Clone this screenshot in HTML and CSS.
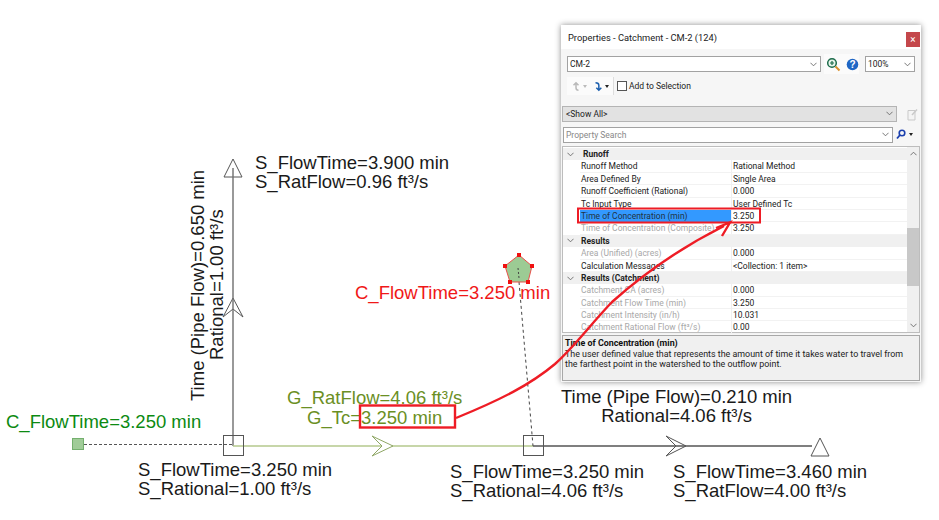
FILE: index.html
```html
<!DOCTYPE html>
<html lang="en">
<head>
<meta charset="utf-8">
<title>Properties - Catchment</title>
<link rel="stylesheet" href="styles.css">
</head>
<body>
<main class="canvas">
  <svg class="layer" viewBox="0 0 939 520" width="939" height="520" aria-hidden="true">
    <g fill="none">
      <path d="M233 159l-9 18h18z" stroke="#555" fill="#fff"/>
      <path d="M223 317L233 298L243 317L233 309Z" stroke="#555" fill="#fff"/>
      <path d="M233 168V446" stroke="#6e6e6e" stroke-width="1.4"/>
      <path d="M233 446H533" stroke="#b5c98c" stroke-width="1.4"/>
      <path d="M372 436L393 446L372 456L382 446Z" stroke="#8fa765" fill="#fff"/>
      <path d="M84 444.500H233" stroke="#555" stroke-dasharray="3 2"/>
      <path d="M518 270L533 446" stroke="#444" stroke-dasharray="3 3"/>
      <path d="M666 436L686 446L666 456L676 446Z" stroke="#555" fill="#fff"/>
      <path d="M533 446H812" stroke="#555" stroke-width="1.4"/>
      <path d="M820 438l-9 18h18z" stroke="#555" fill="#fff"/>
      <rect x="223.500" y="435.500" width="20" height="20" stroke="#555" />
      <rect x="523.500" y="435.500" width="20" height="20" stroke="#555" />
      <rect x="72.500" y="438.500" width="11" height="11" fill="#a0cc98" stroke="#74b06e"/>
      <path d="M519 255L532 266L528 282H510L505 266Z" fill="#9ccb94" stroke="#e8504a"/>
    </g>
    <g fill="#f01010">
      <rect x="517" y="253" width="4" height="4"/>
      <rect x="530" y="264" width="4" height="4"/>
      <rect x="526" y="280" width="4" height="4"/>
      <rect x="508" y="280" width="4" height="4"/>
      <rect x="503" y="264" width="4" height="4"/>
    </g>
    <path d="M518 268L519 278" stroke="#444" stroke-dasharray="2 2"/>
  </svg>

  <p class="label black l-s3900">S_FlowTime=3.900 min<br>S_RatFlow=0.96 ft³/s</p>
  <p class="label black l-vertical">Time (Pipe Flow)=0.650 min<br>Rational=1.00 ft³/s</p>
  <p class="label red l-cred">C_FlowTime=3.250 min</p>
  <p class="label green l-cgreen">C_FlowTime=3.250 min</p>
  <p class="label olive l-gutter">G_RatFlow=4.06 ft³/s<br>G_Tc=3.250 min</p>
  <p class="label black l-s1">S_FlowTime=3.250 min<br>S_Rational=1.00 ft³/s</p>
  <p class="label black l-s2">S_FlowTime=3.250 min<br>S_Rational=4.06 ft³/s</p>
  <p class="label black l-s3">S_FlowTime=3.460 min<br>S_RatFlow=4.00 ft³/s</p>
  <p class="label black l-pipe">Time (Pipe Flow)=0.210 min<br>Rational=4.06 ft³/s</p>

  <section class="window">
    <header class="titlebar">
      <span class="title">Properties - Catchment - CM-2 (124)</span>
      <span class="close">×</span>
    </header>

    <div class="row row-element">
      <div class="combo combo-main"><span>CM-2</span><svg class="chev" viewBox="0 0 8 5"><path d="M.5.500L4 4 7.500.500"/></svg></div>
      <div class="tools">
        <svg width="15" height="15" viewBox="0 0 15 15"><circle cx="6" cy="6" r="4.300" fill="#e6f4ea" stroke="#1c6b4a" stroke-width="1.500"/><path d="M4 6h4M6 4v4" stroke="#1c6b4a" stroke-width="1.200"/><path d="M9.500 9.500L13.500 13.500" stroke="#d9902c" stroke-width="2"/></svg>
        <svg width="13" height="13" viewBox="0 0 13 13"><circle cx="6.500" cy="6.500" r="5.800" fill="#1f66c4"/><text x="6.500" y="10" text-anchor="middle" class="help">?</text></svg>
      </div>
      <div class="combo combo-zoom"><span>100%</span><svg class="chev" viewBox="0 0 8 5"><path d="M.5.500L4 4 7.500.500"/></svg></div>
    </div>

    <div class="row row-nav">
      <div class="nav">
        <svg width="12" height="13" viewBox="0 0 12 13"><path d="M3 5L6 2 9 5M6 2V8q0 3 3 3" fill="none" stroke="#b9b9b9" stroke-width="1.800"/></svg>
        <span class="caret caret-off"></span>
        <svg width="12" height="13" viewBox="0 0 12 13"><path d="M3 2q4 0 4 3V11M4 8L7 11 10 8" fill="none" stroke="#1c5fae" stroke-width="1.800"/></svg>
        <span class="caret"></span>
      </div>
      <span class="check"></span>
      <span>Add to Selection</span>
    </div>

    <div class="row row-show">
      <div class="combo combo-show"><span>&lt;Show All&gt;</span><svg class="chev" viewBox="0 0 8 5"><path d="M.5.500L4 4 7.500.500"/></svg></div>
      <svg class="note" width="13" height="14" viewBox="0 0 13 14"><path d="M2 3.500H9V13H2Z" fill="#f4f4f4" stroke="#c9c9c9"/><path d="M6 8L11 2.500" stroke="#c9c9c9" stroke-width="1.500"/></svg>
    </div>

    <div class="row row-search">
      <div class="combo combo-search"><span>Property Search</span><svg class="chev" viewBox="0 0 8 5"><path d="M.5.500L4 4 7.500.500"/></svg></div>
      <svg width="10" height="11" viewBox="0 0 10 11"><circle cx="6" cy="4" r="2.800" fill="none" stroke="#1a3fae" stroke-width="1.600"/><path d="M4 6L1 9.500" stroke="#1a3fae" stroke-width="1.800"/></svg>
      <span class="caret"></span>
    </div>

    <div class="grid">
      <div class="props">
        <div class="group"><svg class="toggle" viewBox="0 0 8 5"><path d="M.5.500L4 4 7.500.500"/></svg><b class="group-runoff">Runoff</b></div>
        <div class="prop"><span class="k">Runoff Method</span><span class="v">Rational Method</span></div>
        <div class="prop"><span class="k">Area Defined By</span><span class="v">Single Area</span></div>
        <div class="prop"><span class="k">Runoff Coefficient (Rational)</span><span class="v">0.000</span></div>
        <div class="prop"><span class="k">Tc Input Type</span><span class="v">User Defined Tc</span></div>
        <div class="prop selected"><span class="k">Time of Concentration (min)</span><span class="v">3.250</span></div>
        <div class="prop"><span class="k off">Time of Concentration (Composite)</span><span class="v">3.250</span></div>
        <div class="group"><svg class="toggle" viewBox="0 0 8 5"><path d="M.5.500L4 4 7.500.500"/></svg><b>Results</b></div>
        <div class="prop"><span class="k off">Area (Unified) (acres)</span><span class="v">0.000</span></div>
        <div class="prop"><span class="k">Calculation Messages</span><span class="v">&lt;Collection: 1 item&gt;</span></div>
        <div class="group"><svg class="toggle" viewBox="0 0 8 5"><path d="M.5.500L4 4 7.500.500"/></svg><b>Results (Catchment)</b></div>
        <div class="prop"><span class="k off">Catchment CA (acres)</span><span class="v">0.000</span></div>
        <div class="prop"><span class="k off">Catchment Flow Time (min)</span><span class="v">3.250</span></div>
        <div class="prop"><span class="k off">Catchment Intensity (in/h)</span><span class="v">10.031</span></div>
        <div class="prop"><span class="k off">Catchment Rational Flow (ft³/s)</span><span class="v">0.00</span></div>
      </div>
      <div class="scrollbar">
        <svg class="chev up" viewBox="0 0 8 5"><path d="M.5 4.500L4 1 7.500 4.500"/></svg>
        <div class="track"><div class="thumb"></div></div>
        <svg class="chev" viewBox="0 0 8 5"><path d="M.5.500L4 4 7.500.500"/></svg>
      </div>
    </div>

    <div class="description">
      <b>Time of Concentration (min)</b>
      <p>The user defined value that represents the amount of time it takes water to travel from the farthest point in the watershed to the outflow point.</p>
    </div>
  </section>

  <svg class="layer" viewBox="0 0 939 520" width="939" height="520" aria-hidden="true">
    <rect x="360" y="405.500" width="95" height="22" fill="none" stroke="#ee1c25" stroke-width="2.400"/>
    <rect x="578" y="208.500" width="182" height="14" fill="none" stroke="#ee1c25" stroke-width="2"/>
    <path d="M456 418C500 400 530 385 555 364C575 346 590 325 612 302C640 277 680 248 724 226" fill="none" stroke="#ee1c25" stroke-width="2.400"/>
    <path d="M716 228L730 222.500L722 236" fill="none" stroke="#ee1c25" stroke-width="2.400"/>
  </svg>
</main>
</body>
</html>
```
FILE: styles.css
```css
* { box-sizing: border-box; }
html, body { margin: 0; padding: 0; background: #fff; }
.canvas {
  position: relative;
  width: 939px;
  height: 520px;
  overflow: hidden;
  background: #fff;
  font-family: "Liberation Sans", Arial, sans-serif;
}
.layer { position: absolute; left: 0; top: 0; pointer-events: none; }

.label {
  position: absolute;
  margin: 0;
  font-size: 18.500px;
  line-height: 19px;
  white-space: nowrap;
}
.black { color: #1a1a1a; }
.red { color: #f01818; }
.green { color: #0c8a12; }
.olive { color: #6b8f24; text-align: center; }
.l-s3900 { left: 255px; top: 153px; }
.l-vertical { left: 188px; top: 169px; writing-mode: vertical-rl; transform: rotate(180deg); text-align: center; height: 232px; }
.l-cred { left: 355px; top: 283px; }
.l-cgreen { left: 6px; top: 412px; }
.l-gutter { left: 287px; top: 388px; line-height: 20px; }
.l-s1 { left: 138px; top: 460px; }
.l-s2 { left: 450px; top: 462px; }
.l-s3 { left: 673px; top: 462px; }
.l-pipe { left: 561px; top: 387px; text-align: center; }

.window {
  position: absolute;
  left: 561px;
  top: 25px;
  width: 360px;
  height: 357px;
  background: #f6f6f6;
  box-shadow: 0 0 6px rgba(0, 0, 0, .45);
  display: flex;
  flex-direction: column;
  font-family: Roboto, "Liberation Sans", sans-serif;
  font-size: 8.500px;
  color: #222;
}
.titlebar {
  height: 24px;
  background: #fff;
  display: flex;
  align-items: center;
  justify-content: space-between;
  padding: 0 1px 0 7px;
}
.title { font-size: 9.300px; }
.close {
  width: 14px;
  height: 15px;
  margin-top: 4px;
  background: #c4474b;
  color: #fff;
  font-size: 10px;
  line-height: 15px;
  text-align: center;
}
.row { display: flex; align-items: center; }
.row-element { height: 24px; margin-top: 3px; padding: 0 5px 0 6px; gap: 3px; }
.combo {
  display: flex;
  align-items: center;
  justify-content: space-between;
  background: #fff;
  border: 1px solid #a2a2a2;
  padding: 0 3px 0 2px;
  height: 16px;
}
.combo-main { width: 254px; }
.combo-zoom { width: 50px; margin-left: 3px; }
.tools { display: flex; align-items: center; gap: 5px; width: 35px; height: 20px; background: #fbfbfb; padding-left: 2px; }
.chev { width: 7px; height: 5px; flex: none; }
.chev path, .toggle path { fill: none; stroke: #666; stroke-width: 1; }
.help { fill: #fff; font-size: 10px; font-weight: 700; font-family: "Liberation Sans", sans-serif; }

.row-nav { height: 18px; margin-top: 1px; padding-left: 6px; }
.nav { display: flex; align-items: center; gap: 2px; height: 18px; width: 47px; background: #fbfbfb; padding-left: 4px; border-right: 1px solid #ddd; margin-right: 3px; }
.caret { width: 0; height: 0; border: 2px solid transparent; border-top: 3px solid #222; border-bottom: 0; margin-right: 4px; }
.caret-off { border-top-color: #bbb; }
.check { width: 10px; height: 10px; border: 1px solid #555; background: #fff; margin-right: 2px; }

.row-show { height: 17px; margin-top: 10px; padding-left: 1px; gap: 9px; }
.combo-show { width: 335px; background: #e2e2e2; border-color: #b4b4b4; height: 16px; padding-left: 3px; }
.note { flex: none; }

.row-search { height: 17px; margin-top: 4px; padding-left: 2px; gap: 3px; }
.combo-search { width: 330px; color: #888; height: 16px; }

.grid {
  display: flex;
  margin: 3px 1px 0;
  height: 187px;
  border: 1px solid #bdbdbd;
  background: #fff;
}
.props { flex: 1; padding-top: 1px; min-width: 0; }
.group {
  height: 12.400px;
  line-height: 12px;
  background: #f0f0f0;
  display: flex;
  align-items: center;
}
.toggle { width: 7px; height: 5px; margin: 0 7px 0 4px; flex: none; }
.group b { font-weight: 700; }
.group-runoff { margin-left: 2px; }
.prop {
  height: 12.400px;
  line-height: 12px;
  display: grid;
  grid-template-columns: 152px 1fr;
  margin-left: 17px;
  border-bottom: 1px solid #f2f2f2;
}
.k { padding-left: 1px; white-space: nowrap; overflow: hidden; border-right: 1px solid #f0f0f0; }
.v { padding-left: 1px; }
.off { color: #a8a8a8; }
.selected .k { background: #3399ff; color: #234; }
.scrollbar {
  width: 12px;
  background: #f0f0f0;
  display: flex;
  flex-direction: column;
  align-items: center;
  justify-content: space-between;
  padding: 4px 0;
  flex: none;
}
.track { flex: 1; width: 100%; padding-top: 72px; }
.thumb { height: 58px; background: #c8c8c8; }

.description {
  flex: 1;
  margin: 2px 1px 1px;
  padding: 2px 2px;
  background: #f0f0f0;
  border: 1px solid #a8a8a8;
  font-size: 8.900px;
  line-height: 10.500px;
}
.description b { font-weight: 700; display: block; color: #111; }
.description p { margin: 0; }
```
